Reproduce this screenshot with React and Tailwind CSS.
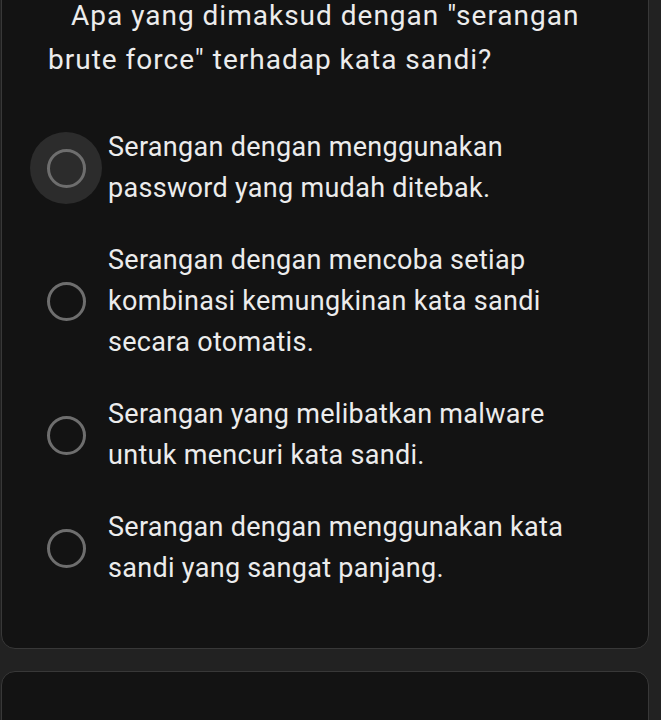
import React from "react";

const options = [
  "Serangan dengan menggunakan password yang mudah ditebak.",
  "Serangan dengan mencoba setiap kombinasi kemungkinan kata sandi secara otomatis.",
  "Serangan yang melibatkan malware untuk mencuri kata sandi.",
  "Serangan dengan menggunakan kata sandi yang sangat panjang.",
];

function Radio({ hover }) {
  return (
    <div
      className={
        "flex h-[72px] w-[72px] shrink-0 items-center justify-center rounded-full " +
        (hover ? "bg-[#2c2c2c]" : "")
      }
    >
      <div className="h-[39px] w-[39px] rounded-full border-[3px] border-[#6e6e6e]" />
    </div>
  );
}

export default function App() {
  return (
    <div
      className="h-[720px] overflow-hidden bg-[#222222] pl-[1px]"
      style={{ fontFamily: "Roboto, 'Noto Sans', sans-serif" }}
    >
      {/* quiz card, scrolled so its top sits above the window */}
      <div className="-mt-[31px] w-[648px] rounded-[14px] border border-[#383838] bg-[#131313] pb-[59px] pt-[24px]">
        <p className="pl-[46px] pr-[44px] indent-[23px] text-[28px] leading-[44px] tracking-[1px] text-[#ececec]">
          Apa yang dimaksud dengan "serangan brute force" terhadap kata sandi?
        </p>

        <div className="mt-[45px] flex flex-col gap-[31px] pl-[28px] pr-[46px]">
          {options.map((text, i) => (
            <label key={i} className="flex items-center gap-[6px]">
              <Radio hover={i === 0} />
              <span className="text-[27px] leading-[41px] tracking-[0.3px] text-[#ececec]">
                {text}
              </span>
            </label>
          ))}
        </div>
      </div>

      <div className="mt-[22px] h-[80px] w-[648px] rounded-[14px] border border-[#383838] bg-[#131313]" />
    </div>
  );
}
